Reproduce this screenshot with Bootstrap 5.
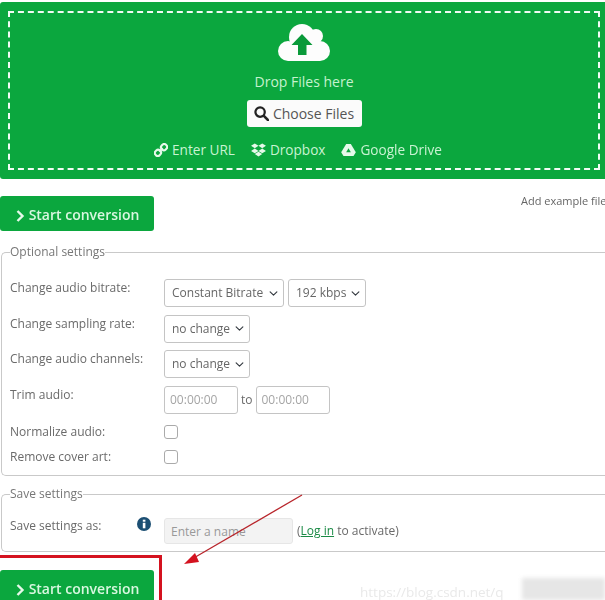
<!DOCTYPE html>
<html lang="en">
<head>
<meta charset="utf-8">
<title>Audio converter</title>
<link rel="stylesheet" href="https://cdn.jsdelivr.net/npm/bootstrap@5.3.0/dist/css/bootstrap.min.css">
<style>
html,body{height:600px;overflow:hidden;}
body{font-family:"Open Sans","Liberation Sans",sans-serif;font-size:12px;color:#6a6a6a;background:#fff;position:relative;}
.page-wrap{width:605px;padding-top:2px;filter:blur(.45px);}
.drop-zone{background:#0ba73e;height:177px;padding:9px 5px 9px 8px;border-radius:3px 0 0 3px;}
.drop-inner{height:159px;border:2px dashed #f2fbf4;color:#c9f3d2;padding-top:11px;}
.cloud{width:52px;height:37px;display:block;}
.drop-text{font-size:14px;line-height:20px;margin-top:11px;color:#c6f2cf;}
.choose-btn{background:#fbfbfb;color:#555;font-size:14px;line-height:20px;width:115px;height:27px;padding:3px 0;border:0;border-radius:3px;margin-top:8px;}
.choose-btn:hover{background:#fbfbfb;color:#555;}
.src-links{margin-top:13px;margin-right:12px;font-size:13.6px;line-height:20px;gap:16px;}
.src-links span{color:#c9f3d2;}
.start-btn{background:#0ba73e;color:#d9f7e0;font-size:14px;font-weight:600;line-height:20px;width:154px;height:35px;padding:2px 0 0 16px;border:0;border-radius:3px;text-align:left;}
.start-btn:hover{background:#0ba73e;color:#d9f7e0;}
.top-actions{margin-top:17px;height:35px;}
.example-link{font-size:11px;line-height:14px;color:#666;white-space:nowrap;margin-top:-2px;width:84px;}
.opt-box{border:1px solid #c9c9c9;border-right:0;border-radius:5px 0 0 5px;margin:0 0 0 1px;padding:0 0 0 8px;}
.opt-box legend{float:none;width:auto;font-size:12px;line-height:18px;margin:0;padding:0;color:#777;}
.first-box{margin-top:12px;height:233px;}
.second-box{margin-top:9px;height:67px;}
.set-row{height:35.5px;}
.rows-top{padding-top:18px;}
.set-label{width:154px;flex:none;line-height:18px;}
.set-sel{height:28px;font-size:12px;line-height:18px;padding:0 14px 0 7px;border:1px solid #c4c4c4;border-radius:3px;color:#666;background-position:right 4px center;background-size:11px 9px;background-color:#fff;}
.sel-a{width:120px;}.sel-b{width:78px;}.sel-c{width:86px;}
.time-in{width:74px;height:28px;font-size:12px;padding:0 5px;border:1px solid #c4c4c4;border-radius:3px;}
.time-in::placeholder{color:#a5a5a5;opacity:1;}
.time-sep{margin:0 3px;line-height:28px;}
.check-box{width:14px;height:14px;margin:0;border:1px solid #aaa;border-radius:3px;float:none;}
.check-row{height:25px;}
.check-row .set-label{line-height:13px;}
.save-row{padding-top:14px;}
.save-label{padding-right:13px;}
.name-in{width:129px;height:26px;font-size:12px;padding:0 6px;background:#f3f3f3;border:1px solid #e6e6e6;border-radius:3px;margin-top:1px;}
.name-in::placeholder{color:#999;opacity:1;}
.save-note{margin-left:4px;line-height:28px;}
.save-link{color:#1a8a45;}
.red-frame{width:162px;height:50px;border:3px solid #d4121f;border-left:0;border-bottom:0;margin-top:3px;padding-top:12px;}
.arrow-layer{position:absolute;left:0;top:0;width:605px;height:600px;pointer-events:none;}
.wm-text{position:absolute;left:360px;top:585px;font-size:13.5px;line-height:14px;color:#e9e9e9;white-space:nowrap;}
.wm-patch{position:absolute;left:522px;top:578px;width:83px;height:22px;background:#e6e6e6;filter:blur(2px);}
</style>
</head>
<body>
<div class="page-wrap">
  <div class="drop-zone">
    <div class="drop-inner d-flex flex-column align-items-center">
      <svg class="cloud" viewBox="0 0 52 37" aria-hidden="true">
        <g fill="#fdfdfd"><circle cx="24" cy="13" r="13"/><circle cx="38" cy="12" r="7"/><circle cx="10" cy="27" r="10"/><circle cx="42" cy="27" r="10"/><rect x="10" y="18" width="32" height="19"/></g>
        <path fill="#0a9a3a" d="M24 10L34.500 21L28.500 21L28.500 31L20 31L20 21L13.500 21Z"/>
      </svg>
      <div class="drop-text">Drop Files here</div>
      <button type="button" class="btn choose-btn d-flex align-items-center justify-content-center gap-1">
        <svg width="15" height="15" viewBox="0 0 16 16" aria-hidden="true"><circle cx="6.500" cy="6.500" r="5" fill="none" stroke="#222" stroke-width="2.400"/><path d="M10.500 10.500L15 15" stroke="#222" stroke-width="2.800" stroke-linecap="round"/></svg>
        Choose Files
      </button>
      <div class="src-links d-flex">
        <span class="d-flex align-items-center gap-1">
          <svg width="14" height="14" viewBox="0 0 16 16" fill="none" stroke="#e6f9ea" stroke-width="2.400" aria-hidden="true"><rect x="8" y="1.500" width="7" height="6.500" rx="3" transform="rotate(-45 11.500 4.750)"/><rect x="1" y="8" width="7" height="6.500" rx="3" transform="rotate(-45 4.500 11.250)"/><path d="M6 10L10 6"/></svg>
          Enter URL
        </span>
        <span class="d-flex align-items-center gap-1">
          <svg width="15" height="14" viewBox="0 0 16 15" fill="#e6f9ea" aria-hidden="true"><path d="M4 0.500L8 3L4 5.500L0 3ZM12 0.500L16 3L12 5.500L8 3ZM4 6L8 8.500L4 11L0 8.500ZM12 6L16 8.500L12 11L8 8.500ZM4 11.800L8 9.300L12 11.800L8 14.500Z"/></svg>
          Dropbox
        </span>
        <span class="d-flex align-items-center gap-1">
          <svg width="15" height="14" viewBox="0 0 16 14" aria-hidden="true"><path fill="#e6f9ea" d="M5.500 0.500H10.500L15.800 9.500L13.300 13.500H2.700L0.200 9.500Z"/><path fill="#0ba73e" d="M8 5L10.500 9.500H5.500Z"/></svg>
          Google Drive
        </span>
      </div>
    </div>
  </div>

  <div class="top-actions d-flex justify-content-between">
    <button type="button" class="btn start-btn">
      <svg width="9" height="12" viewBox="0 0 9 12" aria-hidden="true"><path d="M1.500 1L6.500 6L1.500 11" fill="none" stroke="#e6f9ea" stroke-width="2.400"/></svg>
      Start conversion
    </button>
    <div class="example-link">Add example file</div>
  </div>

  <fieldset class="opt-box first-box">
    <legend>Optional settings</legend>
    <div class="rows-top">
      <div class="set-row d-flex">
        <div class="set-label">Change audio bitrate:</div>
        <div class="d-flex gap-1">
          <select class="form-select set-sel sel-a" aria-label="Bitrate type"><option>Constant Bitrate</option></select>
          <select class="form-select set-sel sel-b" aria-label="Bitrate"><option>192 kbps</option></select>
        </div>
      </div>
      <div class="set-row d-flex">
        <div class="set-label">Change sampling rate:</div>
        <select class="form-select set-sel sel-c" aria-label="Sampling rate"><option>no change</option></select>
      </div>
      <div class="set-row d-flex">
        <div class="set-label">Change audio channels:</div>
        <select class="form-select set-sel sel-c" aria-label="Channels"><option>no change</option></select>
      </div>
      <div class="set-row d-flex">
        <div class="set-label">Trim audio:</div>
        <div class="d-flex align-items-start">
          <input class="form-control time-in" placeholder="00:00:00" aria-label="Start">
          <span class="time-sep">to</span>
          <input class="form-control time-in" placeholder="00:00:00" aria-label="End">
        </div>
      </div>
      <div class="check-row d-flex mt-1">
        <div class="set-label">Normalize audio:</div>
        <input type="checkbox" class="form-check-input check-box" aria-label="Normalize audio">
      </div>
      <div class="check-row d-flex">
        <div class="set-label">Remove cover art:</div>
        <input type="checkbox" class="form-check-input check-box" aria-label="Remove cover art">
      </div>
    </div>
  </fieldset>

  <fieldset class="opt-box second-box">
    <legend>Save settings</legend>
    <div class="d-flex save-row">
      <div class="set-label save-label d-flex justify-content-between">
        <span>Save settings as:</span>
        <svg width="14" height="14" viewBox="0 0 14 14" aria-hidden="true"><circle cx="7" cy="7" r="7" fill="#1c4f73"/><rect x="5.800" y="5.800" width="2.600" height="5.500" fill="#fff"/><rect x="5.800" y="2.700" width="2.600" height="2" fill="#fff"/></svg>
      </div>
      <input class="form-control name-in" placeholder="Enter a name" aria-label="Name">
      <span class="save-note">(<a href="#" class="save-link">Log in</a> to activate)</span>
    </div>
  </fieldset>

  <div class="red-frame">
    <button type="button" class="btn start-btn">
      <svg width="9" height="12" viewBox="0 0 9 12" aria-hidden="true"><path d="M1.500 1L6.500 6L1.500 11" fill="none" stroke="#e6f9ea" stroke-width="2.400"/></svg>
      Start conversion
    </button>
  </div>
</div>

<svg class="arrow-layer" viewBox="0 0 605 600" aria-hidden="true">
  <path d="M302 495L192 559" stroke="#b8252b" stroke-width="1.300" fill="none"/>
  <path d="M184 564L195 553L199 562Z" fill="#d4121f"/>
</svg>
<div class="wm-text">https://blog.csdn.net/q</div>
<div class="wm-patch"></div>
</body>
</html>
